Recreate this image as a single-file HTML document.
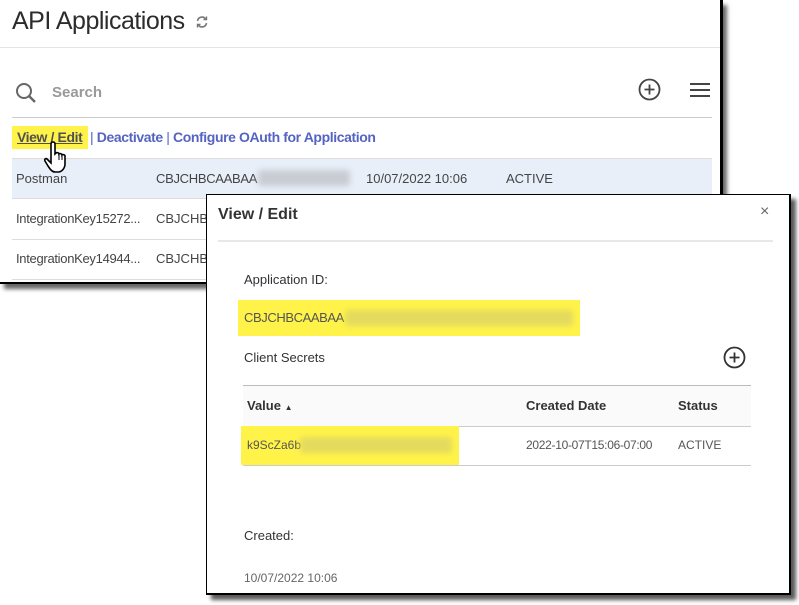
<!DOCTYPE html>
<html><head><meta charset="utf-8"><style>
body{margin:0;width:799px;height:605px;background:#fff;position:relative;overflow:hidden;font-family:"Liberation Sans",sans-serif;color:#333}
.a{position:absolute}
.blur{position:absolute;background:#c9ccd2;filter:blur(3px);border-radius:3px}
</style></head><body>
<div class="a" style="left:0;top:0;width:720px;height:282px;background:#fff;border-right:3px solid #000;border-bottom:2px solid #000;box-shadow:4px 5px 4px rgba(0,0,0,.6)"></div>
<div class="a" style="left:12px;top:7px;font-size:25px;color:#2c2c2c;letter-spacing:-0.5px">API Applications</div>
<svg class="a" style="left:195px;top:15px" width="14" height="14" viewBox="0 0 14 14"><path d="M2.5 6a4.5 4.5 0 0 1 8.3-1.8M11.5 8a4.5 4.5 0 0 1-8.3 1.8" fill="none" stroke="#777" stroke-width="1.6"/><path d="M11.5 1.5v3h-3M2.5 12.5v-3h3" fill="none" stroke="#777" stroke-width="1.4"/></svg>
<div class="a" style="left:0;top:47px;width:720px;height:1px;background:#e5e5e5"></div>
<svg class="a" style="left:15px;top:82px" width="22" height="22" viewBox="0 0 22 22"><circle cx="9" cy="9" r="7" fill="none" stroke="#666" stroke-width="2"/><path d="M14 14l6 6" stroke="#666" stroke-width="2.4"/></svg>
<div class="a" style="left:52px;top:84px;font-size:15px;font-weight:bold;color:#999">Search</div>
<svg class="a" style="left:638px;top:78px" width="23" height="23" viewBox="0 0 23 23"><circle cx="11.5" cy="11.5" r="10" fill="none" stroke="#444" stroke-width="1.8"/><path d="M11.5 6.5v10M6.5 11.5h10" stroke="#444" stroke-width="1.8"/></svg>
<svg class="a" style="left:690px;top:82px" width="21" height="16"><path d="M0 2h20M0 8h20M0 14h20" stroke="#444" stroke-width="2"/></svg>
<div class="a" style="left:12px;top:117px;width:700px;height:1px;background:#ccc"></div>
<div class="a" style="left:12px;top:126px;width:76px;height:23px;background:#fff34a"></div>
<div class="a" style="left:17px;top:129px;font-size:14px;font-weight:bold;color:#505050;text-decoration:underline;letter-spacing:-0.4px">View / Edit</div>
<div class="a" style="left:90px;top:129px;font-size:14px;font-weight:bold;color:#5563c1;letter-spacing:-0.4px"><span style="font-weight:normal">|</span> Deactivate <span style="font-weight:normal">|</span> Configure OAuth for Application</div>
<div class="a" style="left:12px;top:158px;width:700px;height:40px;background:#e8eff9;border-top:1px solid #ddd"></div>
<div class="a" style="left:12px;top:198px;width:700px;height:1px;background:#ddd"></div>
<div class="a" style="left:12px;top:239px;width:700px;height:1px;background:#ddd"></div>
<div class="a" style="left:12px;top:279px;width:700px;height:1px;background:#ddd"></div>
<svg class="a" style="left:42px;top:140px;z-index:5" width="30" height="34" viewBox="0 0 30 34"><path d="M11 2c1.5 0 2 1 2 2v10l1-1c1-1 3 0 3 1 1-1 3 0 3 1 1-1 3 0 3 1v8c0 4-3 8-7 8h-3c-3 0-5-3-7-6l-3-5c-1-2 1-3 2-2l4 4V4c0-1 .5-2 2-2z" fill="#fff" stroke="#000" stroke-width="1.6"/><path d="M17 15v5M20 16v4" stroke="#000" stroke-width="1"/></svg>
<div class="a" style="left:16px;top:171px;font-size:13px;color:#444">Postman</div>
<div class="a" style="left:156px;top:171px;font-size:13px;color:#444;letter-spacing:-0.3px">CBJCHBCAABAA</div>
<div class="blur" style="left:258px;top:170px;width:92px;height:16px"></div>
<div class="a" style="left:366px;top:171px;font-size:13px;color:#444">10/07/2022 10:06</div>
<div class="a" style="left:506px;top:171px;font-size:13px;color:#444">ACTIVE</div>
<div class="a" style="left:16px;top:211px;font-size:13px;color:#444;letter-spacing:-0.3px">IntegrationKey15272...</div>
<div class="a" style="left:156px;top:211px;font-size:13px;color:#444">CBJCHBC</div>
<div class="a" style="left:16px;top:251px;font-size:13px;color:#444;letter-spacing:-0.3px">IntegrationKey14944...</div>
<div class="a" style="left:156px;top:251px;font-size:13px;color:#444">CBJCHBC</div>
<div class="a" style="left:206px;top:194px;width:582px;height:398px;background:#fff;border:1px solid #000;border-right:2px solid #000;border-bottom:2px solid #000;box-shadow:5px 5px 4px rgba(0,0,0,.65);z-index:6"></div>
<div style="position:absolute;left:0;top:0;z-index:7">
<div class="a" style="left:218px;top:206px;font-size:16px;font-weight:bold;color:#333;white-space:nowrap">View / Edit</div>
<div class="a" style="left:760px;top:203px;font-size:16px;color:#666">×</div>
<div class="a" style="left:218px;top:240px;width:555px;height:2px;background:#e8e8e8"></div>
<div class="a" style="left:244px;top:272px;font-size:13px;color:#333;white-space:nowrap">Application ID:</div>
<div class="a" style="left:238px;top:300px;width:342px;height:36px;background:#fff34a"></div>
<div class="a" style="left:244px;top:310px;font-size:13px;color:#555;letter-spacing:-0.4px">CBJCHBCAABAA</div>
<div class="blur" style="left:345px;top:310px;width:228px;height:16px;background:#e4da5e"></div>
<div class="a" style="left:244px;top:350px;font-size:13px;color:#333;white-space:nowrap">Client Secrets</div>
<svg class="a" style="left:723px;top:346px" width="23" height="23" viewBox="0 0 23 23"><circle cx="11.5" cy="11.5" r="10" fill="none" stroke="#333" stroke-width="1.8"/><path d="M11.5 6.5v10M6.5 11.5h10" stroke="#333" stroke-width="1.8"/></svg>
<div class="a" style="left:243px;top:385px;width:508px;height:40px;background:#fafafa;border-top:1px solid #bbb;border-bottom:1px solid #ccc"></div>
<div class="a" style="left:247px;top:398px;font-size:13px;font-weight:bold;color:#333;white-space:nowrap">Value <span style="font-size:8px">▲</span></div>
<div class="a" style="left:526px;top:398px;font-size:13px;font-weight:bold;color:#333;white-space:nowrap">Created Date</div>
<div class="a" style="left:678px;top:398px;font-size:13px;font-weight:bold;color:#333">Status</div>
<div class="a" style="left:243px;top:465px;width:508px;height:1px;background:#ccc"></div>
<div class="a" style="left:241px;top:426px;width:218px;height:39px;background:#fff34a"></div>
<div class="a" style="left:247px;top:438px;font-size:12px;color:#555">k9ScZa6b</div>
<div class="blur" style="left:300px;top:437px;width:152px;height:16px;background:#e4da5e"></div>
<div class="a" style="left:526px;top:438px;font-size:12px;color:#555;letter-spacing:-0.3px;white-space:nowrap">2022-10-07T15:06-07:00</div>
<div class="a" style="left:678px;top:438px;font-size:12px;color:#555">ACTIVE</div>
<div class="a" style="left:244px;top:528px;font-size:13px;color:#333">Created:</div>
<div class="a" style="left:244px;top:571px;font-size:12px;color:#666;white-space:nowrap">10/07/2022 10:06</div>
</div>
</body></html>
